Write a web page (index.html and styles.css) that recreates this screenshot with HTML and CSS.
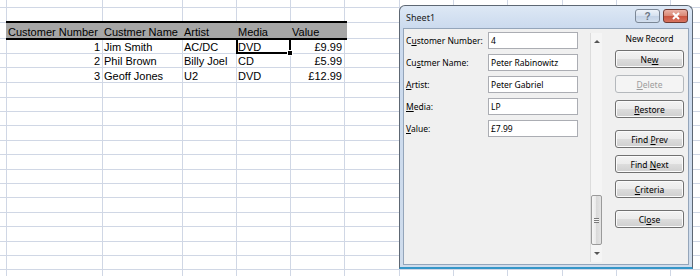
FILE: index.html
```html
<!DOCTYPE html>
<html lang="en">
<head>
    <meta charset="UTF-8">
    <title>Sheet1 - Data Form</title>
    <link rel="stylesheet" href="styles.css">
</head>
<body>
    <!-- Worksheet grid, filled in by the script below -->
    <div class="sheet" id="sheet"></div>

    <!-- Data form dialog -->
    <div class="dialog">
        <div class="titlebar">
            <span class="title">Sheet1</span>
            <div class="caption-buttons">
                <span class="cap-btn help">?</span>
                <span class="cap-btn close">
                    <svg width="10" height="8" viewBox="0 0 10 8"><path d="M2 1L8 7M8 1L2 7" stroke="#fff" stroke-width="2"/></svg>
                </span>
            </div>
        </div>
        <div class="client">
            <div class="fields">
                <span class="label">C<u>u</u>stomer Number:</span><span class="field">4</span>
                <span class="label">Cu<u>s</u>tmer Name:</span><span class="field">Peter Rabinowitz</span>
                <span class="label"><u>A</u>rtist:</span><span class="field">Peter Gabriel</span>
                <span class="label"><u>M</u>edia:</span><span class="field">LP</span>
                <span class="label"><u>V</u>alue:</span><span class="field">£7.99</span>
            </div>
            <div class="scrollbar">
                <span class="arrow"><span class="tri up"></span></span>
                <span class="track"><span class="thumb"><span class="grip"></span></span></span>
                <span class="arrow"><span class="tri down"></span></span>
            </div>
            <div class="actions">
                <div class="record">New Record</div>
                <button class="btn first">Ne<u>w</u></button>
                <button class="btn" disabled><u>D</u>elete</button>
                <button class="btn"><u>R</u>estore</button>
                <button class="btn spaced">Find <u>P</u>rev</button>
                <button class="btn">Find <u>N</u>ext</button>
                <button class="btn"><u>C</u>riteria</button>
                <button class="btn spaced">Cl<u>o</u>se</button>
            </div>
        </div>
    </div>

    <script>
        // Sheet contents: column A..E, row 3 is the header
        const headers = ["Customer Number", "Custmer Name", "Artist", "Media", "Value"];
        const rows = {
            3: ["1", "Jim Smith", "AC/DC", "DVD", "£9.99"],
            4: ["2", "Phil Brown", "Billy Joel", "CD", "£5.99"],
            5: ["3", "Geoff Jones", "U2", "DVD", "£12.99"]
        };
        const numCols = 13;
        const numRows = 20;
        const sheet = document.getElementById("sheet");

        function makeCell(text, className) {
            const div = document.createElement("div");
            div.className = className;
            div.textContent = text;
            return div;
        }

        for (let r = 0; r < numRows; r++) {
            if (r === 2) {
                sheet.appendChild(makeCell("", "cell"));
                const band = document.createElement("div");
                band.className = "header-band";
                headers.forEach(h => band.appendChild(makeCell(h, "head")));
                sheet.appendChild(band);
                for (let c = 6; c < numCols; c++) sheet.appendChild(makeCell("", "cell"));
                continue;
            }
            const data = rows[r];
            for (let c = 0; c < numCols; c++) {
                let text = "";
                let cls = "cell";
                if (data && c >= 1 && c <= 5) {
                    text = data[c - 1];
                    if (c === 1 || c === 5) cls += " num";
                    if (r === 3 && c === 4) cls += " selected";
                }
                sheet.appendChild(makeCell(text, cls));
            }
        }
    </script>
</body>
</html>
```

FILE: styles.css
```css
body {
    margin: 0;
    background: #fff;
    font-family: "Liberation Sans", Arial, sans-serif;
    overflow: hidden;
}

/* worksheet */
.sheet {
    display: grid;
    grid-template-columns: 6px 95px 79px 53px 53px 53px 54px 53px 53px 54px 53px 53px 40px;
    grid-template-rows: 7px 14px 15px 14px 13px 14px 14px 13px 13px 14px 13px 14px 13px 13px 14px 13px 14px 13px 13px 14px;
    gap: 1px;
    background: #d0d7e5;
    width: 700px;
    height: 276px;
    overflow: hidden;
}
.cell {
    background: #fff;
    font-size: 11px;
    line-height: 12px;
    padding: 0 1px;
    white-space: nowrap;
    display: flex;
    align-items: flex-end;
}
.cell.num {
    justify-content: flex-end;
    padding-right: 2px;
}
.cell.selected {
    outline: 2px solid #000;
    outline-offset: -1px;
    position: relative;
    z-index: 2;
}
.cell.selected::after {
    content: "";
    position: absolute;
    right: -3px;
    bottom: -3px;
    width: 4px;
    height: 4px;
    background: #000;
    border: 1px solid #fff;
}
.header-band {
    grid-column: 2 / 7;
    margin: -2px -3px -2px -1px;
    border-top: 2px solid #000;
    border-bottom: 2px solid #000;
    background: #a6a6a6;
    display: flex;
    z-index: 1;
}
.head {
    font-size: 11px;
    line-height: 12px;
    padding-left: 2px;
    box-sizing: border-box;
    white-space: nowrap;
    display: flex;
    align-items: flex-end;
    width: 54px;
}
.head:nth-child(1) { width: 96px; }
.head:nth-child(2) { width: 80px; }
.head:nth-child(5) { width: 56px; }

/* data form dialog */
.dialog {
    position: absolute;
    left: 399px;
    top: 5px;
    width: 294px;
    height: 264px;
    box-sizing: border-box;
    display: flex;
    flex-direction: column;
    padding: 0 3px 2px;
    border: 1px solid #5d6773;
    border-bottom: 2px solid #3596c8;
    border-radius: 6px 6px 0 0;
    background: linear-gradient(#dde8f5, #cbdaee 22px, #cfdcec);
    font-family: "Noto Sans", "Liberation Sans", sans-serif;
    font-size: 8.5px;
    color: #000;
}
.titlebar {
    height: 22px;
    display: flex;
    align-items: center;
    padding: 0 1px 0 3px;
}
.title {
    font-size: 9px;
    color: #1b1b1b;
}
.caption-buttons {
    margin-left: auto;
    align-self: flex-start;
    margin-top: 3px;
    display: flex;
    gap: 3px;
}
.cap-btn {
    width: 25px;
    height: 14px;
    box-sizing: border-box;
    border-radius: 3px;
    display: flex;
    align-items: center;
    justify-content: center;
}
.help {
    border: 1px solid #7b8796;
    background: linear-gradient(#eef3fa, #d6e1ef 50%, #c3d2e6 50%, #d3dfee);
    color: #6b7684;
    font-family: "Liberation Sans", sans-serif;
    font-weight: bold;
    font-size: 10px;
}
.close {
    border: 1px solid #6e3a33;
    background: linear-gradient(#eab1a5, #d98774 50%, #c9533f 50%, #d87460);
}
.client {
    flex: 1;
    display: flex;
    background: #f0f0f0;
    border: 1px solid #94a5ba;
    padding: 3px 0 0 1px;
}
.fields {
    display: grid;
    grid-template-columns: 83px 90px;
    grid-auto-rows: 17px;
    row-gap: 5px;
    align-items: center;
    align-content: start;
}
.label {
    white-space: nowrap;
    padding-left: 1px;
}
.field {
    height: 17px;
    box-sizing: border-box;
    border: 1px solid #abadb3;
    background: #fff;
    padding-left: 2px;
    line-height: 15px;
    white-space: nowrap;
}
.scrollbar {
    width: 12px;
    margin: 1px 0 2px 12px;
    display: flex;
    flex-direction: column;
    border-left: 1px solid #dcdcdc;
    background: #f5f5f5;
    box-sizing: border-box;
}
.arrow {
    height: 17px;
    display: flex;
    align-items: center;
    justify-content: center;
}
.tri {
    width: 0;
    height: 0;
    border-left: 3px solid transparent;
    border-right: 3px solid transparent;
}
.tri.up { border-bottom: 3px solid #555; }
.tri.down { border-top: 3px solid #555; }
.track {
    flex: 1;
    display: flex;
    flex-direction: column;
    justify-content: flex-end;
}
.thumb {
    height: 48px;
    border: 1px solid #9a9a9a;
    border-radius: 2px;
    background: linear-gradient(to right, #f6f6f6, #e8e8e8 50%, #d9d9d9 50%, #e4e4e4);
    display: flex;
    align-items: center;
    justify-content: center;
}
.grip {
    width: 5px;
    height: 5px;
    background: repeating-linear-gradient(#7a7a7a 0 1px, #f4f4f4 1px 2px);
}
.actions {
    width: 69px;
    margin-left: 13px;
    display: flex;
    flex-direction: column;
}
.record {
    line-height: 12px;
    margin-top: 1px;
    text-align: center;
    white-space: nowrap;
}
.btn {
    height: 18px;
    margin-top: 7px;
    padding: 0;
    border: 1px solid #707070;
    border-radius: 3px;
    background: linear-gradient(#f3f3f3, #ebebeb 50%, #dddddd 50%, #cfcfcf);
    box-shadow: inset 0 0 0 1px #fbfbfb;
    font-family: inherit;
    font-size: 8.5px;
    color: #000;
}
.btn.first { margin-top: 5px; }
.btn.spaced { margin-top: 12px; }
.btn:disabled {
    border-color: #b4b8bc;
    background: #f4f4f4;
    box-shadow: none;
    color: #9c9c9c;
}
```
